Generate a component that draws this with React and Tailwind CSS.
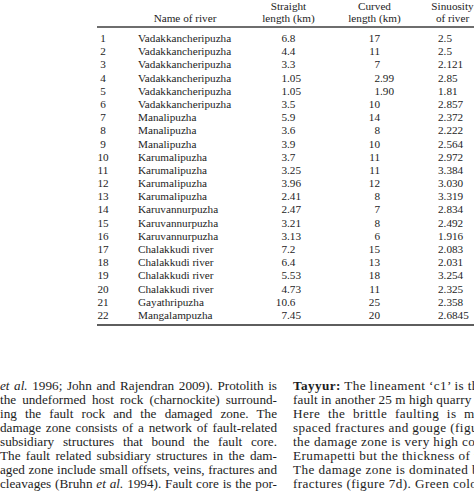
const rows = [
  ['1', 'Vadakkancheripuzha', '6.8', '17', '2.5'],
  ['2', 'Vadakkancheripuzha', '4.4', '11', '2.5'],
  ['3', 'Vadakkancheripuzha', '3.3', '7', '2.121'],
  ['4', 'Vadakkancheripuzha', '1.05', '2.99', '2.85'],
  ['5', 'Vadakkancheripuzha', '1.05', '1.90', '1.81'],
  ['6', 'Vadakkancheripuzha', '3.5', '10', '2.857'],
  ['7', 'Manalipuzha', '5.9', '14', '2.372'],
  ['8', 'Manalipuzha', '3.6', '8', '2.222'],
  ['9', 'Manalipuzha', '3.9', '10', '2.564'],
  ['10', 'Karumalipuzha', '3.7', '11', '2.972'],
  ['11', 'Karumalipuzha', '3.25', '11', '3.384'],
  ['12', 'Karumalipuzha', '3.96', '12', '3.030'],
  ['13', 'Karumalipuzha', '2.41', '8', '3.319'],
  ['14', 'Karuvannurpuzha', '2.47', '7', '2.834'],
  ['15', 'Karuvannurpuzha', '3.21', '8', '2.492'],
  ['16', 'Karuvannurpuzha', '3.13', '6', '1.916'],
  ['17', 'Chalakkudi river', '7.2', '15', '2.083'],
  ['18', 'Chalakkudi river', '6.4', '13', '2.031'],
  ['19', 'Chalakkudi river', '5.53', '18', '3.254'],
  ['20', 'Chalakkudi river', '4.73', '11', '2.325'],
  ['21', 'Gayathripuzha', '10.6', '25', '2.358'],
  ['22', 'Mangalampuzha', '7.45', '20', '2.6845'],
]

// decimal aligned number: integer part right-aligned in a fixed box
function Dec({ v, box }) {
  const [a, b] = v.split('.')
  return (
    <>
      <span className={'inline-block text-right ' + box}>{a}</span>
      {b !== undefined && '.' + b}
    </>
  )
}

const Line = ({ children }) => (
  <div className="h-[14px] text-justify [text-align-last:justify] whitespace-nowrap">{children}</div>
)

export default function App() {
  return (
    <div className="w-[474px] h-[492px] overflow-hidden bg-white text-[#1d1d1d] font-['Liberation_Serif',serif]">
      {/* Table */}
      <div className="pl-[97px] w-[480px]">
        <div className="flex text-[11.2px] leading-[12px]">
          <div className="w-[12px] shrink-0" />
          <div className="ml-[29px] w-[94px] shrink-0 flex flex-col justify-end text-center">Name of river</div>
          <div className="ml-[28px] w-[57px] shrink-0 text-center whitespace-nowrap">
            <div>Straight</div>
            <div>length (km)</div>
          </div>
          <div className="ml-[30px] w-[55px] shrink-0 text-center whitespace-nowrap">
            <div>Curved</div>
            <div>length (km)</div>
          </div>
          <div className="ml-[28px] w-[45px] shrink-0 text-center whitespace-nowrap">
            <div>Sinuosity</div>
            <div>of river</div>
          </div>
        </div>
        <div className="mt-[2px] h-[2px] bg-[#6e6e6e]" />

        <div className="pt-[4px] text-[11.2px] leading-[13.2px]">
          {rows.map((r) => (
            <div key={r[0]} className="flex h-[13.2px] whitespace-nowrap">
              <span className="w-[12px] shrink-0 text-center">{r[0]}</span>
              <span className="ml-[29px] w-[94px] shrink-0">{r[1]}</span>
              <span className="ml-[28px] w-[57px] shrink-0">
                <Dec v={r[2]} box="w-[27px]" />
              </span>
              <span className="ml-[30px] w-[55px] shrink-0">
                <Dec v={r[3]} box="w-[33px]" />
              </span>
              <span className="ml-[28px] w-[45px] shrink-0 pl-[8px]">{r[4]}</span>
            </div>
          ))}
        </div>
        <div className="mt-[2px] h-[2px] bg-[#5e5e5e]" />
      </div>

      {/* Body text, two columns */}
      <div className="mt-[53px] flex text-[13.2px] leading-[14px]">
        <div className="w-[277px] shrink-0">
          <Line><i>et al.</i> 1996; John and Rajendran 2009). Protolith is</Line>
          <Line>the undeformed host rock (charnockite) surround-</Line>
          <Line>ing the fault rock and the damaged zone. The</Line>
          <Line>damage zone consists of a network of fault-related</Line>
          <Line>subsidiary structures that bound the fault core.</Line>
          <Line>The fault related subsidiary structures in the dam-</Line>
          <Line>aged zone include small offsets, veins, fractures and</Line>
          <Line>cleavages (Bruhn <i>et al.</i> 1994). Fault core is the por-</Line>
        </div>
        <div className="ml-[16px] whitespace-nowrap tracking-[0.4px]">
          <div className="h-[14px]"><b>Tayyur:</b> The lineament ‘c1’ is the</div>
          <div className="h-[14px] tracking-[0.1px]">fault in another 25 m high quarry</div>
          <div className="h-[14px] [word-spacing:4px]">Here the brittle faulting is marked</div>
          <div className="h-[14px]">spaced fractures and gouge (figure</div>
          <div className="h-[14px]">the damage zone is very high com-</div>
          <div className="h-[14px]">Erumapetti but the thickness of the</div>
          <div className="h-[14px]">The damage zone is dominated by</div>
          <div className="h-[14px]">fractures (figure 7d). Green colour</div>
        </div>
      </div>
    </div>
  )
}
